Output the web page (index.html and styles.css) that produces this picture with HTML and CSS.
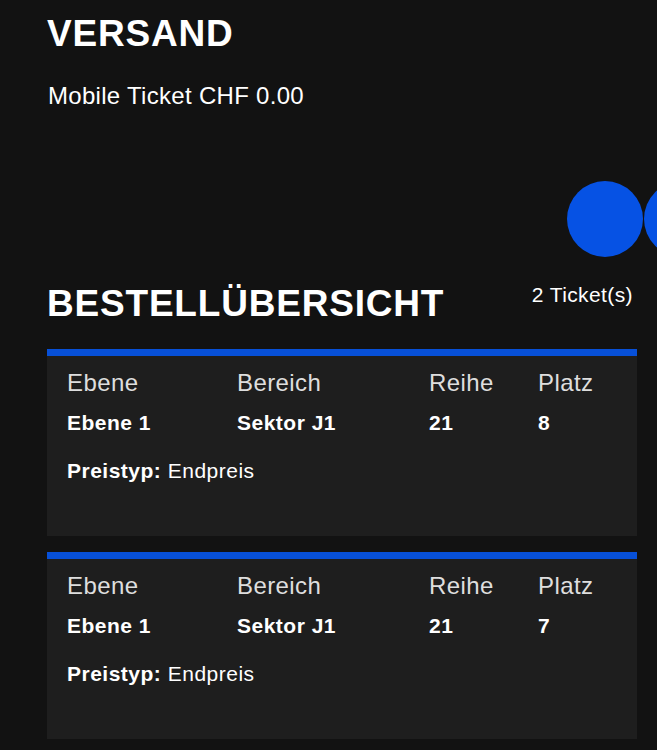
FILE: index.html
```html
<!DOCTYPE html>
<html lang="de">
<head>
<meta charset="utf-8">
<title>Bestellübersicht</title>
<link rel="stylesheet" href="styles.css">
</head>
<body>
<main class="page">
  <section class="shipping">
    <h2 class="heading">VERSAND</h2>
    <p class="shipping-line">Mobile Ticket CHF 0.00</p>
  </section>

  <div class="loader" aria-hidden="true">
    <span class="dot"></span>
    <span class="dot"></span>
    <span class="dot"></span>
  </div>

  <section class="summary">
    <div class="summary-head">
      <h2 class="heading">BESTELLÜBERSICHT</h2>
      <span class="ticket-count">2 Ticket(s)</span>
    </div>

    <div class="ticket">
      <div class="ticket-grid">
        <span class="label">Ebene</span>
        <span class="label">Bereich</span>
        <span class="label">Reihe</span>
        <span class="label">Platz</span>
        <span class="value">Ebene 1</span>
        <span class="value">Sektor J1</span>
        <span class="value">21</span>
        <span class="value">8</span>
      </div>
      <p class="price-type"><strong>Preistyp:</strong> Endpreis</p>
    </div>

    <div class="ticket">
      <div class="ticket-grid">
        <span class="label">Ebene</span>
        <span class="label">Bereich</span>
        <span class="label">Reihe</span>
        <span class="label">Platz</span>
        <span class="value">Ebene 1</span>
        <span class="value">Sektor J1</span>
        <span class="value">21</span>
        <span class="value">7</span>
      </div>
      <p class="price-type"><strong>Preistyp:</strong> Endpreis</p>
    </div>
  </section>
</main>
</body>
</html>
```

FILE: styles.css
```css
html, body {
  margin: 0;
  padding: 0;
  background: #121212;
  overflow-x: hidden;
}

body {
  font-family: "Liberation Sans", Arial, Helvetica, sans-serif;
  color: #ffffff;
}

.page {
  width: 590px;
  margin-left: 47px;
  padding-top: 12px;
}

.heading {
  margin: 0;
  font-size: 37px;
  line-height: 44px;
  font-weight: 700;
  letter-spacing: 0.8px;
}

.shipping-line {
  margin: 26px 0 0 0;
  font-size: 24px;
  line-height: 28px;
  padding-left: 1px;
  letter-spacing: 0.3px;
}

.loader {
  display: flex;
  gap: 1px;
  margin-top: 71px;
  padding-left: 520px;
  width: 90px;
  overflow: hidden;
}

.dot {
  flex: 0 0 auto;
  width: 76px;
  height: 76px;
  border-radius: 50%;
  background: #0652e4;
}

.summary-head {
  display: flex;
  justify-content: space-between;
  align-items: flex-start;
  margin-top: 25px;
}

.ticket-count {
  font-size: 21px;
  line-height: 24px;
  margin-top: 1px;
  margin-right: 4px;
  letter-spacing: 0.4px;
}

.summary-head + .ticket {
  margin-top: 23px;
}

.ticket {
  background: #1e1e1e;
  border-top: 7px solid #0750d8;
  padding: 13px 20px 53px 20px;
}

.ticket + .ticket {
  margin-top: 16px;
}

.ticket-grid {
  display: grid;
  grid-template-columns: 170px 192px 109px 1fr;
  row-gap: 14px;
}

.label {
  font-size: 24px;
  line-height: 28px;
  color: #dedede;
  letter-spacing: 0.4px;
}

.value {
  font-size: 21px;
  line-height: 24px;
  font-weight: 700;
  letter-spacing: 0.5px;
}

.price-type {
  margin: 24px 0 0 0;
  font-size: 21px;
  line-height: 24px;
  letter-spacing: 0.5px;
}

.price-type strong {
  font-weight: 700;
}
```
